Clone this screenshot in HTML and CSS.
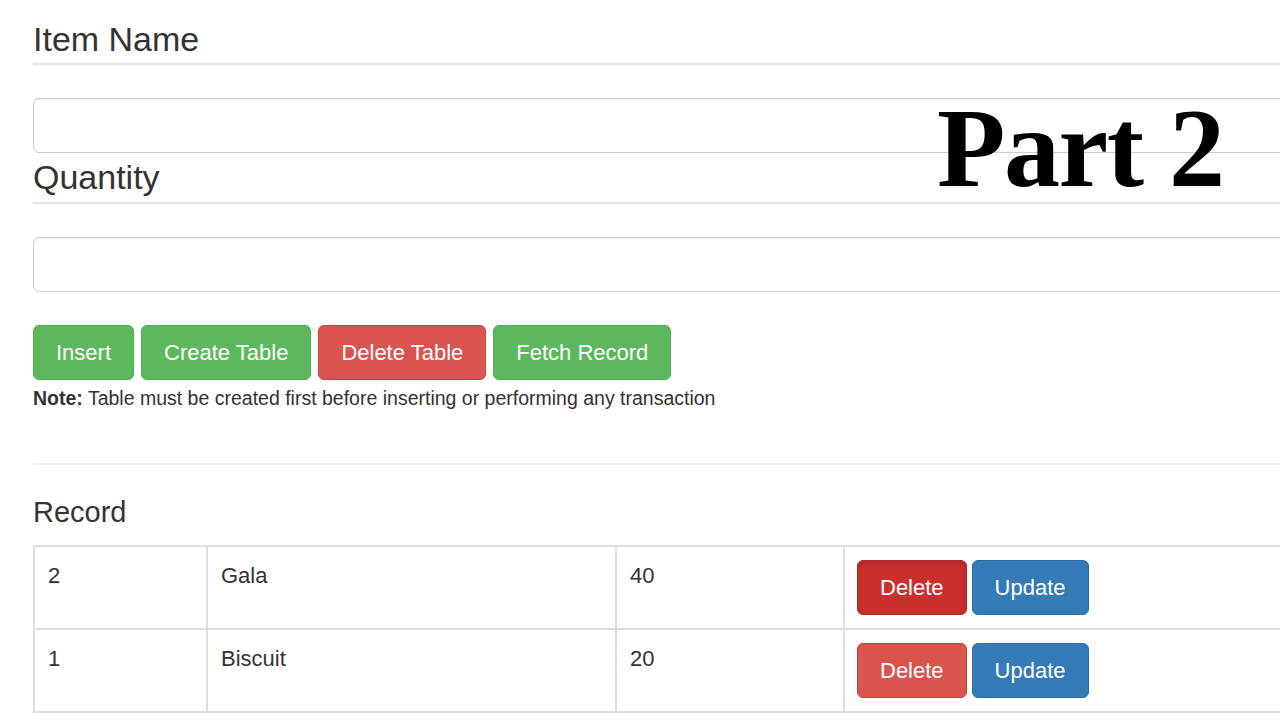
FILE: index.html
```html
<!DOCTYPE html>
<html>
<head>
<meta charset="utf-8">
<link rel="stylesheet" href="styles.css">
</head>
<body>
<div class="page">
  <div class="field-label first">Item Name</div>
  <input class="form-input" type="text">
  <div class="field-label second">Quantity</div>
  <input class="form-input" type="text">
  <div class="actions">
    <button class="btn btn-success">Insert</button>
    <button class="btn btn-success">Create Table</button>
    <button class="btn btn-danger">Delete Table</button>
    <button class="btn btn-success">Fetch Record</button>
  </div>
  <p class="note"><b>Note:</b> Table must be created first before inserting or performing any transaction</p>
  <hr class="divider">
  <h3 class="section-title">Record</h3>
  <table class="records">
    <colgroup>
      <col class="c1"><col class="c2"><col class="c3"><col class="c4">
    </colgroup>
    <tr>
      <td>2</td><td>Gala</td><td>40</td>
      <td class="act"><button class="btn btn-sm btn-danger-active">Delete</button><button class="btn btn-sm btn-primary">Update</button></td>
    </tr>
    <tr>
      <td>1</td><td>Biscuit</td><td>20</td>
      <td class="act"><button class="btn btn-sm btn-danger">Delete</button><button class="btn btn-sm btn-primary">Update</button></td>
    </tr>
  </table>
</div>
<div class="overlay-title">Part 2</div>
</body>
</html>
```

FILE: styles.css
```css
html, body {
  margin: 0;
  padding: 0;
  background: #fff;
  overflow: hidden;
  width: 1280px;
  height: 720px;
}
body {
  font-family: "Liberation Sans", Arial, sans-serif;
  color: #333;
  position: relative;
}
.page {
  width: 1500px;
  padding-left: 33px;
  box-sizing: border-box;
}
.field-label {
  font-size: 34px;
  line-height: 40px;
  padding-bottom: 4px;
  border-bottom: 2px solid #e5e5e5;
  color: #333;
}
.field-label.first { margin-top: 19px; }
.field-label.second { margin-top: 4px; padding-bottom: 5px; }
.form-input {
  display: block;
  box-sizing: border-box;
  width: 100%;
  height: 55px;
  margin-top: 33px;
  border: 1px solid #ccc;
  border-radius: 6px;
  box-shadow: inset 0 1px 1px rgba(0,0,0,.075);
  background: #fff;
  font-size: 22px;
  padding: 0 16px;
}
.actions {
  display: flex;
  gap: 7px;
  margin-top: 33px;
}
.btn {
  font-family: "Liberation Sans", Arial, sans-serif;
  font-size: 22px;
  line-height: 31px;
  padding: 11px 22px;
  border: 1px solid transparent;
  border-radius: 6px;
  color: #fff;
  cursor: pointer;
}
.btn-success { background: #5cb85c; border-color: #4cae4c; }
.btn-danger { background: #d9534f; border-color: #d43f3a; }
.btn-danger-active { background: #c9302c; border-color: #ac2925; box-shadow: inset 0 3px 5px rgba(0,0,0,.125); }
.btn-primary { background: #337ab7; border-color: #2e6da4; }
.btn-sm { line-height: 31px; padding: 11px 22px; margin-right: 5px; }
.note {
  margin: 6px 0 0;
  font-size: 19.5px;
  line-height: 24px;
  color: #333;
}
.divider {
  border: 0;
  border-top: 2px solid #eee;
  margin: 53px 0 0;
}
.section-title {
  margin: 29px 0 0;
  font-size: 29px;
  line-height: 36px;
  font-weight: normal;
}
.records {
  margin-top: 15px;
  border-collapse: collapse;
  width: 1467px;
  table-layout: fixed;
}
.records col.c1 { width: 173px; }
.records col.c2 { width: 409px; }
.records col.c3 { width: 228px; }
.records td {
  border: 2px solid #ddd;
  vertical-align: top;
  padding: 13px 13px 13px;
  font-size: 22px;
  line-height: 31px;
}
.records td.act { padding-left: 12px; }
.overlay-title {
  position: absolute;
  left: 937px;
  top: 92px;
  font-family: "Liberation Serif", "Times New Roman", serif;
  font-weight: bold;
  font-size: 112px;
  line-height: 1;
  letter-spacing: -1.5px;
  color: #000;
}
```
